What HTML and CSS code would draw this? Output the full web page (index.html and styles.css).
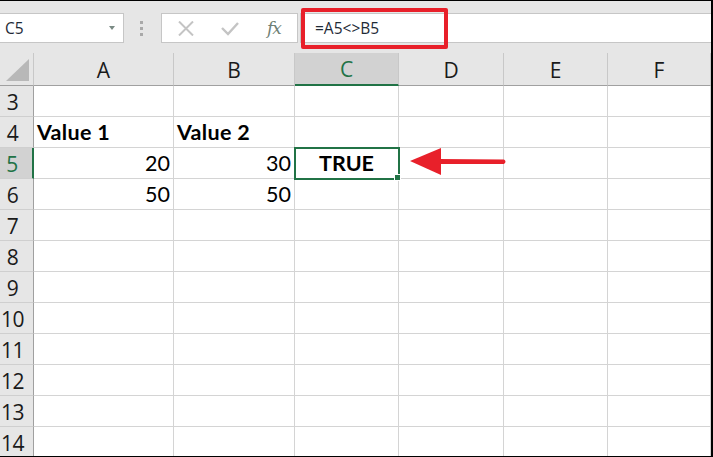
FILE: index.html
```html
<!DOCTYPE html>
<html>
<head>
<meta charset="utf-8">
<link rel="stylesheet" href="styles.css">
</head>
<body>
<div class="frame">
  <div class="toolbar">
    <div class="namebox">
      <span class="name">C5</span>
      <span class="dd"></span>
    </div>
    <div class="dots"><i></i><i></i><i></i></div>
    <div class="buttons">
      <svg class="ico" width="16" height="15" viewBox="0 0 16 15"><path d="M1 0.5 L15 14.5 M15 0.5 L1 14.5" stroke="#c4c4c4" stroke-width="2" fill="none"/></svg>
      <svg class="ico" width="18" height="15" viewBox="0 0 18 15"><path d="M1 7 L7 13 L17 2" stroke="#c4c4c4" stroke-width="2.4" fill="none"/></svg>
      <span class="fx">fx</span>
    </div>
    <div class="formula">=A5&lt;&gt;B5</div>
    <div class="redbox"></div>
  </div>
  <div class="grid">
    <div class="corner"><svg width="24" height="23" viewBox="0 0 24 23"><polygon points="23,0 23,22 0,22" fill="#b8b8b8"/></svg></div>
    <div class="ch">A</div><div class="ch">B</div><div class="ch sel">C</div><div class="ch">D</div><div class="ch">E</div><div class="ch">F</div>

    <div class="rh">3</div><div class="c"></div><div class="c"></div><div class="c"></div><div class="c"></div><div class="c"></div><div class="c"></div>
    <div class="rh">4</div><div class="c b">Value 1</div><div class="c b">Value 2</div><div class="c"></div><div class="c"></div><div class="c"></div><div class="c"></div>
    <div class="rh sel">5</div><div class="c r">20</div><div class="c r">30</div><div class="c b mid active">TRUE</div><div class="c"></div><div class="c"></div><div class="c"></div>
    <div class="rh">6</div><div class="c r">50</div><div class="c r">50</div><div class="c"></div><div class="c"></div><div class="c"></div><div class="c"></div>
    <div class="rh">7</div><div class="c"></div><div class="c"></div><div class="c"></div><div class="c"></div><div class="c"></div><div class="c"></div>
    <div class="rh">8</div><div class="c"></div><div class="c"></div><div class="c"></div><div class="c"></div><div class="c"></div><div class="c"></div>
    <div class="rh">9</div><div class="c"></div><div class="c"></div><div class="c"></div><div class="c"></div><div class="c"></div><div class="c"></div>
    <div class="rh">10</div><div class="c"></div><div class="c"></div><div class="c"></div><div class="c"></div><div class="c"></div><div class="c"></div>
    <div class="rh">11</div><div class="c"></div><div class="c"></div><div class="c"></div><div class="c"></div><div class="c"></div><div class="c"></div>
    <div class="rh">12</div><div class="c"></div><div class="c"></div><div class="c"></div><div class="c"></div><div class="c"></div><div class="c"></div>
    <div class="rh">13</div><div class="c"></div><div class="c"></div><div class="c"></div><div class="c"></div><div class="c"></div><div class="c"></div>
    <div class="rh">14</div><div class="c"></div><div class="c"></div><div class="c"></div><div class="c"></div><div class="c"></div><div class="c"></div>
  </div>
  <svg class="arrow" width="100" height="30" viewBox="0 0 100 30">
    <polygon points="0,13 31,0 31,27" fill="#e8202a"/>
    <path d="M28 11 L94 11.5 Q97 13.5 94 16 L28 16 Z" fill="#e8202a"/>
  </svg>
</div>
</body>
</html>
```

FILE: styles.css
```css
* { box-sizing: border-box; }
html, body { margin: 0; padding: 0; background: #fff; }
.frame {
  position: relative;
  width: 713px;
  height: 457px;
  overflow: hidden;
  border-top: 1px solid #000;
  border-right: 2px solid #000;
  border-bottom: 1px solid #000;
  background: #e6e6e6;
  font-family: "Open Sans", "Noto Sans", sans-serif;
}
.toolbar {
  position: relative;
  height: 52px;
  display: flex;
  align-items: flex-start;
  padding-top: 12px;
}
.namebox {
  width: 124px;
  height: 30px;
  background: #fff;
  border: 1px solid #c6c6c6;
  border-left: none;
  display: flex;
  align-items: center;
  justify-content: space-between;
  padding: 0 8px 0 5px;
}
.name { font-size: 15.5px; color: #1e2a36; }
.dd {
  width: 0; height: 0;
  border-left: 3.5px solid transparent;
  border-right: 3.5px solid transparent;
  border-top: 4px solid #7a8a84;
}
.dots {
  width: 37px;
  height: 30px;
  display: flex;
  flex-direction: column;
  align-items: center;
  justify-content: center;
  gap: 3px;
  padding-right: 2px;
}
.dots i { display: block; width: 3px; height: 3px; background: #a9a9a9; }
.buttons {
  width: 137px;
  height: 30px;
  background: #fff;
  border: 1px solid #c6c6c6;
  display: flex;
  align-items: center;
  padding-left: 16px;
  gap: 27px;
}
.fx {
  font-family: "DejaVu Serif", "Liberation Serif", serif;
  font-style: italic;
  font-size: 17px;
  color: #6f7f75;
  margin-left: 1px;
  letter-spacing: -1px;
}
.formula {
  margin-left: 2px;
  flex: 1;
  height: 30px;
  background: #fff;
  border: 1px solid #c6c6c6;
  border-right: none;
  font-size: 15.5px;
  color: #1e2a36;
  display: flex;
  align-items: center;
  padding-left: 14px;
}
.redbox {
  position: absolute;
  left: 301px;
  top: 7px;
  width: 147px;
  height: 41px;
  border: 4px solid #e8202a;
  border-radius: 2px;
}
.grid {
  display: grid;
  grid-template-columns: 34px 140px 121px 104px 105px 104px 1fr;
  grid-template-rows: 33px;
  grid-auto-rows: 31px;
  background: #fff;
}
.corner {
  background: #e6e6e6;
  border-right: 1px solid #c8c8c8;
  border-bottom: 1px solid #a0a0a0;
  display: flex;
  align-items: flex-end;
  justify-content: flex-end;
  padding: 0 3px 3px 0;
}
.ch {
  background: #e6e6e6;
  border-right: 1px solid #c8c8c8;
  border-bottom: 1px solid #a0a0a0;
  font-size: 21px;
  color: #1a1a1a;
  display: flex;
  align-items: center;
  justify-content: center;
  padding-top: 1px;
}
.ch.sel {
  background: #d2d2d2;
  color: #217346;
  border-bottom: 2px solid #217346;
}
.rh {
  background: #e6e6e6;
  border-right: 1px solid #a0a0a0;
  border-bottom: 1px solid #cfcfcf;
  font-size: 21px;
  color: #1a1a1a;
  display: flex;
  align-items: center;
  justify-content: center;
  padding-right: 8px;
  padding-top: 2px;
  letter-spacing: -0.5px;
}
.rh.sel {
  background: #d2d2d2;
  color: #217346;
  border-right: 2px solid #217346;
}
.c {
  border-right: 1px solid #d4d4d4;
  border-bottom: 1px solid #d4d4d4;
  font-family: "Lato", "Liberation Sans", sans-serif;
  font-size: 21.5px;
  color: #000;
  display: flex;
  align-items: flex-end;
  padding: 0 3px 2px 3px;
  line-height: 26px;
}
.c.b { font-weight: bold; letter-spacing: 0.3px; }
.c.mid { letter-spacing: 0; }
.c.r { justify-content: flex-end; }
.c.mid { justify-content: center; }
.c.active {
  position: relative;
  outline: 2px solid #217346;
  outline-offset: -1px;
}
.c.active::after {
  content: "";
  position: absolute;
  right: -3px;
  bottom: -3px;
  width: 5px;
  height: 5px;
  background: #217346;
  border: 1px solid #fff;
}
.arrow {
  position: absolute;
  left: 410px;
  top: 147px;
}
```
